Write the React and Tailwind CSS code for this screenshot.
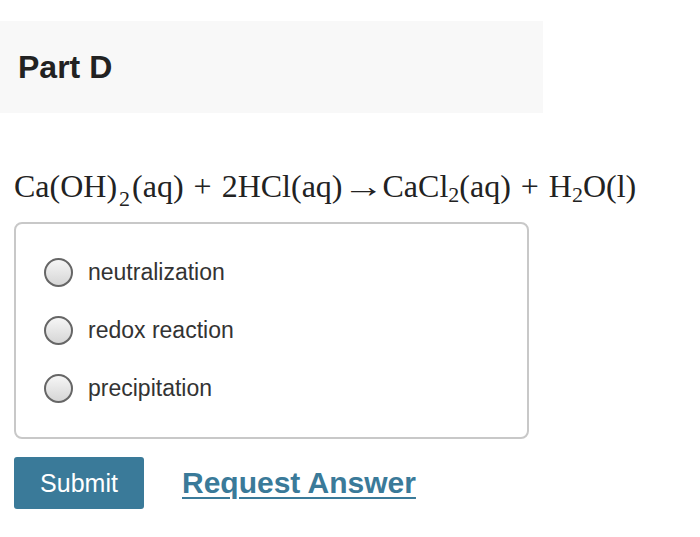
export default function App() {
  const options = ["neutralization", "redox reaction", "precipitation"];

  return (
    <div className="w-[700px] h-[537px] bg-white pt-[21px] font-['Liberation_Sans',Arial,sans-serif]">
      {/* header strip */}
      <div className="w-[543px] h-[92px] bg-[#f8f8f8] flex items-center pl-[18px]">
        <h2 className="text-[32px] font-bold text-[#222] leading-none">Part D</h2>
      </div>

      {/* equation */}
      <div className="pl-[14px] mt-[50px] h-[46px] leading-[46px] font-['Liberation_Serif','Times_New_Roman',serif] text-[32px] text-[#222] whitespace-nowrap">
        <span>Ca(OH)</span>
        <span className="text-[22px] align-[-9px] mx-[2px]">2</span>
        <span>(aq)</span>
        <span className="mx-[10px]">+</span>
        <span>2HCl(aq)</span>
        <span className="inline-block scale-x-[1.3] mx-[4px]">→</span>
        <span>CaCl</span>
        <span className="text-[22px] align-[-5px]">2</span>
        <span>(aq)</span>
        <span className="mx-[10px]">+</span>
        <span>H</span>
        <span className="text-[22px] align-[-5px]">2</span>
        <span>O(l)</span>
      </div>

      {/* answer choices */}
      <div className="ml-[14px] mt-[13px] w-[515px] h-[217px] border-2 border-[#c8c8c8] rounded-[8px] flex flex-col justify-center gap-[30px] pl-[28px]">
        {options.map((opt) => (
          <label key={opt} className="flex items-center gap-[15px] h-[28px]">
            <span className="w-[29px] h-[29px] rounded-full border-2 border-[#666] bg-gradient-to-b from-[#f6f6f6] to-[#d6d6d6] shrink-0" />
            <span className="text-[23px] text-[#333] leading-none">{opt}</span>
          </label>
        ))}
      </div>

      {/* actions */}
      <div className="ml-[14px] mt-[18px] flex items-center gap-[38px]">
        <button className="w-[130px] h-[52px] rounded-[3px] bg-[#3a7a99] text-white text-[25px] leading-none">
          Submit
        </button>
        <a href="#" className="text-[30px] font-bold text-[#3a7a99] underline decoration-2 underline-offset-[4px] leading-none">
          Request Answer
        </a>
      </div>
    </div>
  );
}
